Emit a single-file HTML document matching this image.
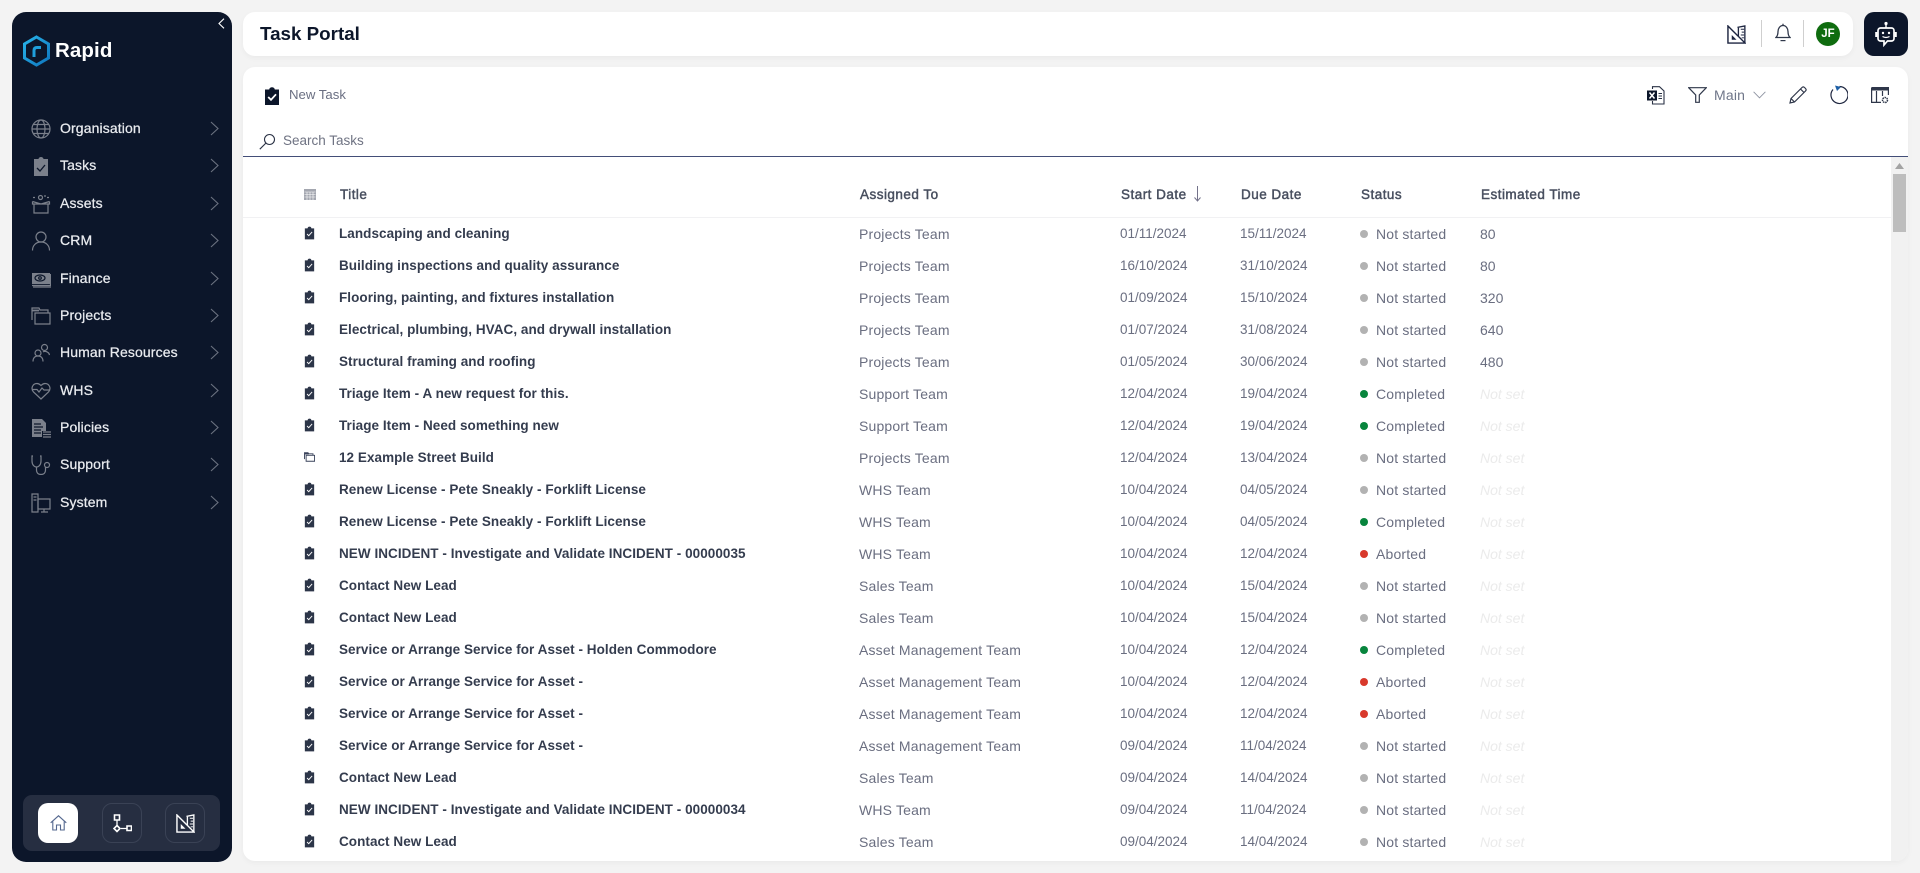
<!DOCTYPE html>
<html lang="en"><head><meta charset="utf-8"><title>Task Portal</title>
<style>
*{box-sizing:border-box}
html,body{margin:0;width:1920px;height:873px;overflow:hidden;background:#f3f3f3;font-family:"Liberation Sans",sans-serif}
.abs,.side,.top,.bot,.main,.n,.n svg,.r,.r>*,.h{position:absolute}
.side{left:12px;top:12px;width:220px;height:850px;background:#0c162a;border-radius:14px}
.top{left:243px;top:12px;width:1610px;height:44px;background:#fff;border-radius:12px;box-shadow:0 2px 6px rgba(0,0,0,.04)}
.bot{left:1864px;top:12px;width:44px;height:44px;background:#0c162a;border-radius:10px}
.main{left:243px;top:67px;width:1665px;height:794px;background:#fff;border-radius:12px;overflow:hidden;box-shadow:0 2px 6px rgba(0,0,0,.04)}
.n{left:0;width:220px;height:30px}
.n b{position:absolute;left:48px;top:-1px;line-height:30px;font-size:14px;font-weight:400;color:#e9ebef;-webkit-text-stroke:.25px #e9ebef;letter-spacing:.12px;white-space:nowrap}
.n svg.i{left:19px;top:5px;width:20px;height:20px;fill:none;stroke:#7b808b;stroke-width:1.2}
.n svg.c{left:198px;top:7px;width:9px;height:15px;fill:none;stroke:#6b7280;stroke-width:1.1}
.h{top:116px;line-height:24px;font-size:13.5px;color:#484f5f;white-space:nowrap;font-weight:400;-webkit-text-stroke:.45px #484f5f;letter-spacing:.48px}
.r{left:0;width:1648px;height:32px;line-height:32px;font-size:14px;color:#6a6e80;white-space:nowrap}
.r svg{left:61px;top:8px;width:11px;height:14px}
.t{left:96px;top:0;font-size:13.5px;font-weight:700;color:#343c4e;letter-spacing:.05px}
.a{left:616px;letter-spacing:.17px}.s{left:877px;font-size:13.5px}.d{left:997px;font-size:13.5px}.u{left:1133px;letter-spacing:.17px}.e{left:1237px}
.o{left:1117px;top:12px;width:8px;height:8px;border-radius:50%;background:#b2b2b2}
.o.g{background:#08853d}.o.x{background:#d8392c}
.e.ns{font-style:italic;color:#ebebeb}
</style></head><body>
<svg width="0" height="0" style="position:absolute">
<symbol id="clip" viewBox="0 0 13 16"><path d="M1 2.500h3.200C4.400 1.200 5.300.5 6.500.5s2.100.7 2.300 2H12V15.500H1z" fill="#2c3548"/><path d="M3.600 9.200l2 2L9.600 6.800" fill="none" stroke="#fff" stroke-width="1.100"/></symbol>
<symbol id="proj" viewBox="0 0 13 16"><path d="M.6 10.500V3h4l1 1.200h5v1.300M2.500 13V6h10v7z" fill="none" stroke="#39425a" stroke-width="1.100"/><path d="M.6 3h5v2H.6z" fill="#39425a"/></symbol>
<symbol id="square" viewBox="0 0 20 20"><path d="M1 1L19 19H1z" fill="none" stroke="currentColor" stroke-width="1.500"/><path d="M5 10.500L10 15.500H5z" fill="currentColor"/><path d="M11 2.500L18.800 1V19M12 3v9" fill="none" stroke="currentColor" stroke-width="1.400"/><path d="M14.500 4.500h3.500M15.500 7.500h2.500M14.500 10.500h3.500M15.500 13.500h2.500" fill="none" stroke="currentColor"/></symbol>
</svg>

<div class="side">
<svg class="abs" style="left:206px;top:6px" width="7" height="11" viewBox="0 0 7 11"><path d="M6 .7L1 5.500l5 4.800" fill="none" stroke="#fff" stroke-width="1.100"/></svg>
<svg class="abs" style="left:10px;top:23px" width="29" height="32" viewBox="0 0 29 32"><defs><linearGradient id="lg" x1="0" y1="0" x2="1" y2="1"><stop offset="0" stop-color="#28b4ea"/><stop offset="1" stop-color="#0f75bd"/></linearGradient></defs><path d="M14.500 2L26.500 9V23L14.500 30L2.500 23V9z" fill="none" stroke="url(#lg)" stroke-width="3"/><path d="M12 22V15.500q0-3 3-3H19" fill="none" stroke="#1f9fdc" stroke-width="3"/></svg>
<div class="abs" style="left:43px;top:27px;font-size:20.500px;line-height:24px;font-weight:700;color:#fff;letter-spacing:.1px">Rapid</div>

<div class="n" style="top:102px"><svg class="i" viewBox="0 0 20 20"><circle cx="10" cy="10" r="9"/><ellipse cx="10" cy="10" rx="4" ry="9"/><path d="M1 10h18M2.200 5.500h15.600M2.200 14.500h15.600"/></svg><b>Organisation</b><svg class="c" viewBox="0 0 9 15"><path d="M1 1l7 6.500L1 14"/></svg></div>
<div class="n" style="top:139px"><svg class="i" viewBox="0 0 20 20"><path d="M3 3h4.500C7.800 1.500 8.800 1 10 1s2.200.5 2.500 2H17v17H3z" fill="#7b808b" stroke="none"/><path d="M6 12l3 3 5-6" stroke="#0c162a" stroke-width="1.300"/></svg><b>Tasks</b><svg class="c" viewBox="0 0 9 15"><path d="M1 1l7 6.500L1 14"/></svg></div>
<div class="n" style="top:177px"><svg class="i" viewBox="0 0 20 20"><path d="M3 10v9h14v-9M1.500 7.500L10 10l8.500-2.500M1.500 7.500V10H18.500V7.500"/><circle cx="9.500" cy="3.500" r="2"/><path d="M2 3.500h2M16 3.500h2M14 1v2"/></svg><b>Assets</b><svg class="c" viewBox="0 0 9 15"><path d="M1 1l7 6.500L1 14"/></svg></div>
<div class="n" style="top:214px"><svg class="i" viewBox="0 0 20 20"><circle cx="10" cy="6" r="5"/><path d="M1.500 19.500c0-5 3.500-8.500 8.500-8.500s8.500 3.500 8.500 8.500"/></svg><b>CRM</b><svg class="c" viewBox="0 0 9 15"><path d="M1 1l7 6.500L1 14"/></svg></div>
<div class="n" style="top:252px"><svg class="i" viewBox="0 0 20 20"><path d="M1 4h18v11H1z" fill="#7b808b" stroke="none"/><ellipse cx="9" cy="9" rx="5" ry="3" stroke="#0c162a"/><circle cx="9" cy="9" r="1.300" stroke="#0c162a"/><path d="M1 16.500h18.500V5"/><path d="M2 18h18"/></svg><b>Finance</b><svg class="c" viewBox="0 0 9 15"><path d="M1 1l7 6.500L1 14"/></svg></div>
<div class="n" style="top:289px"><svg class="i" viewBox="0 0 20 20"><path d="M1 14V2h7l1 2h8v3"/><path d="M4 18V7h15v11z"/><path d="M1 4.500h7" stroke-width="1.800"/></svg><b>Projects</b><svg class="c" viewBox="0 0 9 15"><path d="M1 1l7 6.500L1 14"/></svg></div>
<div class="n" style="top:326px"><svg class="i" viewBox="0 0 20 20"><circle cx="13.500" cy="4.500" r="3"/><circle cx="7" cy="10" r="3"/><path d="M2 18.500c0-3.500 2-5.500 5-5.500s5 2 5 5.500M12 9c1-1 4-1 6 1.500l.5 1.500"/></svg><b>Human Resources</b><svg class="c" viewBox="0 0 9 15"><path d="M1 1l7 6.500L1 14"/></svg></div>
<div class="n" style="top:364px"><svg class="i" viewBox="0 0 20 20"><path d="M10 18L2.500 11C-.5 7.500 1.500 2.500 6 2.500c2 0 3 1 4 2 1-1 2-2 4-2 4.500 0 6.500 5 3.500 8.500z"/><path d="M1 8.500h5l2 2.500 3-4 2 2h6"/></svg><b>WHS</b><svg class="c" viewBox="0 0 9 15"><path d="M1 1l7 6.500L1 14"/></svg></div>
<div class="n" style="top:401px"><svg class="i" viewBox="0 0 20 20"><path d="M1 1h10l4 4v8h-4v6H1z" fill="#7b808b" stroke="none"/><path d="M3 6h7M3 9h9M3 12h7M3 15h7" stroke="#0c162a"/><path d="M12 14h8M12 16.500h8M12 19h8"/></svg><b>Policies</b><svg class="c" viewBox="0 0 9 15"><path d="M1 1l7 6.500L1 14"/></svg></div>
<div class="n" style="top:438px"><svg class="i" viewBox="0 0 20 20"><path d="M2 1H1v5c0 4 2.500 6 4.500 6S10 10 10 6V1H9"/><path d="M5.500 12v3c0 3 2 4.500 4.500 4.500s4.500-1.500 4.500-4.500v-3"/><circle cx="16" cy="10" r="2.500"/></svg><b>Support</b><svg class="c" viewBox="0 0 9 15"><path d="M1 1l7 6.500L1 14"/></svg></div>
<div class="n" style="top:476px"><svg class="i" viewBox="0 0 20 20"><path d="M1 1h6v18H1z"/><path d="M7 6h12v10H7z"/><path d="M10 19h7M13 16v3M2.500 4h3M2.500 7h3"/></svg><b>System</b><svg class="c" viewBox="0 0 9 15"><path d="M1 1l7 6.500L1 14"/></svg></div>

<div class="abs" style="left:11px;top:783px;width:197px;height:56px;background:#262e41;border-radius:9px">
<div class="abs" style="left:15px;top:8px;width:40px;height:40px;background:#fff;border-radius:10px"><svg class="abs" style="left:12px;top:12px" width="17" height="16" viewBox="0 0 17 16"><path d="M.7 7.800L8.500 .8l7.800 7M2.800 6.500V15h3.700v-5h4v5h3.700V6.500" fill="none" stroke="#55688f" stroke-width="1.100"/></svg></div>
<div class="abs" style="left:79px;top:8px;width:40px;height:40px;border:1px solid #3a4255;border-radius:10px"><svg class="abs" style="left:10px;top:10px" width="19" height="19" viewBox="0 0 19 19"><path d="M4 6v6M8 14.500h6" stroke="#fff" stroke-width="1.300"/><path d="M1.500 1h5v5h-5zM14 12h4.500v4.500H14z" fill="#262e41" stroke="#fff" stroke-width="1.600"/><path d="M4 11.500l3 3-3 3-3-3z" fill="#262e41" stroke="#fff" stroke-width="1.600"/></svg></div>
<div class="abs" style="left:142px;top:8px;width:40px;height:40px;border:1px solid #3a4255;border-radius:10px;color:#fff"><svg class="abs" style="left:10px;top:10px" width="19" height="19"><use href="#square"/></svg></div>
</div>
</div>

<div class="top">
<div class="abs" style="left:17px;top:10px;font-size:18.800px;line-height:24px;font-weight:700;color:#0c162a">Task Portal</div>
<svg class="abs" style="left:1484px;top:13px;color:#1d2540" width="19" height="19"><use href="#square"/></svg>
<div class="abs" style="left:1518px;top:8px;width:1px;height:27px;background:#cfcfcf"></div>
<svg class="abs" style="left:1532px;top:11px" width="16" height="19" viewBox="0 0 16 19"><path d="M1 14.500c1.500-1.500 2-3 2-6S5 2.500 8 2.500s5 3 5 6 .5 4.500 2 6zM8 .8v1.700" fill="none" stroke="#2f374a" stroke-width="1.300"/><path d="M5.500 17h5v1.200h-5z" fill="#2f374a"/></svg>
<div class="abs" style="left:1560px;top:8px;width:1px;height:27px;background:#cfcfcf"></div>
<div class="abs" style="left:1573px;top:10px;width:24px;height:24px;border-radius:50%;background:#0f6c0f;color:#fff;font-size:11.500px;font-weight:700;line-height:24px;text-align:center">JF</div>
</div>
<div class="bot"><svg class="abs" style="left:11px;top:9px" width="22" height="26" viewBox="0 0 22 26"><path d="M11 2v5" stroke="#fff" stroke-width="1.400"/><circle cx="11" cy="2.500" r="1.600" fill="#fff"/><path d="M1.300 11v5M20.700 11v5" stroke="#fff" stroke-width="2.200"/><path d="M5.500 7h11a2.500 2.500 0 0 1 2.500 2.500v8a2.500 2.500 0 0 1-2.500 2.500h-4l-3.500 4v-4H5.500A2.500 2.500 0 0 1 3 17.500v-8A2.500 2.500 0 0 1 5.500 7z" fill="none" stroke="#fff" stroke-width="1.700"/><circle cx="8" cy="12" r="1.200" fill="#fff"/><circle cx="14" cy="12" r="1.200" fill="#fff"/><path d="M7.500 15.500c2 1.300 5 1.300 7 0" fill="none" stroke="#fff" stroke-width="1.300"/></svg></div>

<div class="main">
<svg class="abs" style="left:22px;top:20px" width="14" height="18" viewBox="0 0 14 18"><path d="M0 2.500h4.200C4.400 1 5.500.2 7 .2S9.600 1 9.800 2.500H14V18H0z" fill="#0c162a"/><path d="M3.200 10l2.800 2.800 5-5.500" fill="none" stroke="#fff" stroke-width="1.800"/></svg>
<div class="abs" style="left:46px;top:19px;line-height:18px;font-size:13.200px;color:#6a6f82;white-space:nowrap">New Task</div>
<svg class="abs" style="left:16px;top:66px" width="17" height="17" viewBox="0 0 17 17"><circle cx="10.500" cy="6.500" r="5" fill="none" stroke="#2a3245" stroke-width="1.100"/><path d="M7 10L.8 16.200" stroke="#2a3245" stroke-width="1.100"/></svg>
<div class="abs" style="left:40px;top:65px;line-height:18px;font-size:13.500px;color:#6f7383;white-space:nowrap">Search Tasks</div>

<svg class="abs" style="left:1404px;top:19px" width="18" height="19" viewBox="0 0 18 19"><path d="M5.500 3V.7H12.500L17 5V18H5.500V15" fill="#fff" stroke="#2a3245" stroke-width="1.100"/><path d="M0 4.500H10V14.500H0z" fill="#0c162a"/><path d="M2.500 6.500l5 6M7.500 6.500l-5 6" stroke="#fff" stroke-width="1.500"/><path d="M11.500 7.500h3.500M11.500 10h3.500M11.500 12.500h3.500" stroke="#2a3245"/></svg>
<svg class="abs" style="left:1445px;top:20px" width="19" height="16" viewBox="0 0 19 16"><path d="M.7.700H18.300L11.300 8V15.300H7.700V8z" fill="none" stroke="#2f374a" stroke-width="1.200"/></svg>
<div class="abs" style="left:1471px;top:19px;line-height:18px;font-size:14px;color:#6f7689;letter-spacing:.2px">Main</div>
<svg class="abs" style="left:1510px;top:24px" width="13" height="8" viewBox="0 0 13 8"><path d="M.6.800l5.900 6 5.900-6" fill="none" stroke="#8f94a2" stroke-width=".9"/></svg>
<svg class="abs" style="left:1546px;top:19px" width="18" height="18" viewBox="0 0 18 18"><path d="M1 17l1-4.500L13 1.500c.8-.8 1.700-.8 2.500 0l1 1c.8.800.8 1.700 0 2.500L5.500 16zM11.500 3l3.500 3.500M2 12.500L5.500 16" fill="none" stroke="#2f374a" stroke-width="1.200"/></svg>
<svg class="abs" style="left:1587px;top:18px" width="18" height="20" viewBox="0 0 18 20"><path d="M3 4.500A8.500 8.500 0 1 0 9.500 1.500" fill="none" stroke="#1f2740" stroke-width="1.200"/><path d="M5 .5L11 2 7 6z" fill="#1d5fa5"/></svg>
<svg class="abs" style="left:1628px;top:20px" width="18" height="17" viewBox="0 0 18 17"><path d="M.6.600H17.400V8M.6.600V15.400H10M5.500 4V15M11.500 4V9" fill="none" stroke="#2f374a" stroke-width="1.200"/><path d="M.6.600H17.400V3.500H.6z" fill="#2f374a"/><circle cx="14" cy="13" r="2.500" fill="none" stroke="#2f374a" stroke-width="1.500" stroke-dasharray="1.500 .7"/></svg>

<div class="abs" style="left:0;top:89px;width:1665px;height:1px;background:#434e78"></div>

<svg class="abs" style="left:61px;top:122px" width="12" height="11" viewBox="0 0 12 11"><path d="M0 0h12v11H0z" fill="#a3a6af"/><path d="M.5 3h11M.5 5.500h11M.5 8h11M3 3v8M6 3v8M9 3v8" stroke="#fff" stroke-width=".6"/></svg>
<div class="h" style="left:97px">Title</div>
<div class="h" style="left:617px">Assigned To</div>
<div class="h" style="left:878px">Start Date</div>
<svg class="abs" style="left:951px;top:119px" width="7" height="16" viewBox="0 0 7 16"><path d="M3.500 0V15M.5 11.500l3 3.500 3-3.500" fill="none" stroke="#73728a"/></svg>
<div class="h" style="left:998px">Due Date</div>
<div class="h" style="left:1118px">Status</div>
<div class="h" style="left:1238px">Estimated Time</div>
<div class="abs" style="left:0;top:150px;width:1648px;height:1px;background:#f1f1f3"></div>

<div class="r" style="top:151px"><svg><use href="#clip"/></svg><span class="t">Landscaping and cleaning</span><span class="a">Projects Team</span><span class="s">01/11/2024</span><span class="d">15/11/2024</span><i class="o"></i><span class="u">Not started</span><span class="e">80</span></div>
<div class="r" style="top:183px"><svg><use href="#clip"/></svg><span class="t">Building inspections and quality assurance</span><span class="a">Projects Team</span><span class="s">16/10/2024</span><span class="d">31/10/2024</span><i class="o"></i><span class="u">Not started</span><span class="e">80</span></div>
<div class="r" style="top:215px"><svg><use href="#clip"/></svg><span class="t">Flooring, painting, and fixtures installation</span><span class="a">Projects Team</span><span class="s">01/09/2024</span><span class="d">15/10/2024</span><i class="o"></i><span class="u">Not started</span><span class="e">320</span></div>
<div class="r" style="top:247px"><svg><use href="#clip"/></svg><span class="t">Electrical, plumbing, HVAC, and drywall installation</span><span class="a">Projects Team</span><span class="s">01/07/2024</span><span class="d">31/08/2024</span><i class="o"></i><span class="u">Not started</span><span class="e">640</span></div>
<div class="r" style="top:279px"><svg><use href="#clip"/></svg><span class="t">Structural framing and roofing</span><span class="a">Projects Team</span><span class="s">01/05/2024</span><span class="d">30/06/2024</span><i class="o"></i><span class="u">Not started</span><span class="e">480</span></div>
<div class="r" style="top:311px"><svg><use href="#clip"/></svg><span class="t">Triage Item - A new request for this.</span><span class="a">Support Team</span><span class="s">12/04/2024</span><span class="d">19/04/2024</span><i class="o g"></i><span class="u">Completed</span><span class="e ns">Not set</span></div>
<div class="r" style="top:343px"><svg><use href="#clip"/></svg><span class="t">Triage Item - Need something new</span><span class="a">Support Team</span><span class="s">12/04/2024</span><span class="d">19/04/2024</span><i class="o g"></i><span class="u">Completed</span><span class="e ns">Not set</span></div>
<div class="r" style="top:375px"><svg><use href="#proj"/></svg><span class="t">12 Example Street Build</span><span class="a">Projects Team</span><span class="s">12/04/2024</span><span class="d">13/04/2024</span><i class="o"></i><span class="u">Not started</span><span class="e ns">Not set</span></div>
<div class="r" style="top:407px"><svg><use href="#clip"/></svg><span class="t">Renew License - Pete Sneakly - Forklift License</span><span class="a">WHS Team</span><span class="s">10/04/2024</span><span class="d">04/05/2024</span><i class="o"></i><span class="u">Not started</span><span class="e ns">Not set</span></div>
<div class="r" style="top:439px"><svg><use href="#clip"/></svg><span class="t">Renew License - Pete Sneakly - Forklift License</span><span class="a">WHS Team</span><span class="s">10/04/2024</span><span class="d">04/05/2024</span><i class="o g"></i><span class="u">Completed</span><span class="e ns">Not set</span></div>
<div class="r" style="top:471px"><svg><use href="#clip"/></svg><span class="t">NEW INCIDENT - Investigate and Validate INCIDENT - 00000035</span><span class="a">WHS Team</span><span class="s">10/04/2024</span><span class="d">12/04/2024</span><i class="o x"></i><span class="u">Aborted</span><span class="e ns">Not set</span></div>
<div class="r" style="top:503px"><svg><use href="#clip"/></svg><span class="t">Contact New Lead</span><span class="a">Sales Team</span><span class="s">10/04/2024</span><span class="d">15/04/2024</span><i class="o"></i><span class="u">Not started</span><span class="e ns">Not set</span></div>
<div class="r" style="top:535px"><svg><use href="#clip"/></svg><span class="t">Contact New Lead</span><span class="a">Sales Team</span><span class="s">10/04/2024</span><span class="d">15/04/2024</span><i class="o"></i><span class="u">Not started</span><span class="e ns">Not set</span></div>
<div class="r" style="top:567px"><svg><use href="#clip"/></svg><span class="t">Service or Arrange Service for Asset - Holden Commodore</span><span class="a">Asset Management Team</span><span class="s">10/04/2024</span><span class="d">12/04/2024</span><i class="o g"></i><span class="u">Completed</span><span class="e ns">Not set</span></div>
<div class="r" style="top:599px"><svg><use href="#clip"/></svg><span class="t">Service or Arrange Service for Asset -</span><span class="a">Asset Management Team</span><span class="s">10/04/2024</span><span class="d">12/04/2024</span><i class="o x"></i><span class="u">Aborted</span><span class="e ns">Not set</span></div>
<div class="r" style="top:631px"><svg><use href="#clip"/></svg><span class="t">Service or Arrange Service for Asset -</span><span class="a">Asset Management Team</span><span class="s">10/04/2024</span><span class="d">12/04/2024</span><i class="o x"></i><span class="u">Aborted</span><span class="e ns">Not set</span></div>
<div class="r" style="top:663px"><svg><use href="#clip"/></svg><span class="t">Service or Arrange Service for Asset -</span><span class="a">Asset Management Team</span><span class="s">09/04/2024</span><span class="d">11/04/2024</span><i class="o"></i><span class="u">Not started</span><span class="e ns">Not set</span></div>
<div class="r" style="top:695px"><svg><use href="#clip"/></svg><span class="t">Contact New Lead</span><span class="a">Sales Team</span><span class="s">09/04/2024</span><span class="d">14/04/2024</span><i class="o"></i><span class="u">Not started</span><span class="e ns">Not set</span></div>
<div class="r" style="top:727px"><svg><use href="#clip"/></svg><span class="t">NEW INCIDENT - Investigate and Validate INCIDENT - 00000034</span><span class="a">WHS Team</span><span class="s">09/04/2024</span><span class="d">11/04/2024</span><i class="o"></i><span class="u">Not started</span><span class="e ns">Not set</span></div>
<div class="r" style="top:759px"><svg><use href="#clip"/></svg><span class="t">Contact New Lead</span><span class="a">Sales Team</span><span class="s">09/04/2024</span><span class="d">14/04/2024</span><i class="o"></i><span class="u">Not started</span><span class="e ns">Not set</span></div>

<div class="abs" style="left:1648px;top:90px;width:17px;height:704px;background:#f1f1f1"></div>
<svg class="abs" style="left:1652px;top:96px" width="9" height="6" viewBox="0 0 9 6"><path d="M4.500 0L9 6H0z" fill="#a3a3a3"/></svg>
<div class="abs" style="left:1650px;top:107px;width:13px;height:58px;background:#bdbdbd"></div>
</div>
</body></html>
